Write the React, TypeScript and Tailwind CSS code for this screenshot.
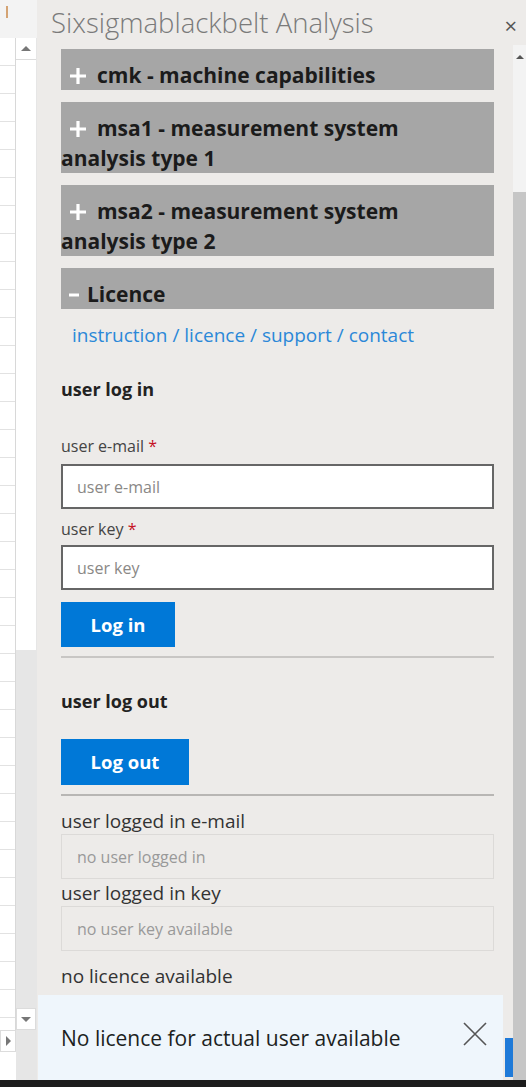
import React from 'react'

const FONT = { fontFamily: '"Open Sans", "Noto Sans", "Liberation Sans", sans-serif' }

function Sign({ open }: { open: boolean }) {
  return open ? (
    <svg width="10" height="16" viewBox="0 0 10 16" className="ml-[8px] mr-[8px] inline-block align-[-1px]">
      <path d="M0 8 H10" stroke="#fff" strokeWidth="3" />
    </svg>
  ) : (
    <svg width="16" height="16" viewBox="0 0 16 16" className="ml-[9px] mr-[11px] inline-block align-[-1px]">
      <path d="M8 0 V16 M0 8 H16" stroke="#fff" strokeWidth="3.2" />
    </svg>
  )
}

function Section({ open, title }: { open?: boolean; title: React.ReactNode }) {
  return (
    <div className="min-h-[41px] bg-[#a6a6a6] pr-[16px] pt-[11px] text-[21px] font-bold leading-[30px] text-[#1b1b1b]">
      <Sign open={!!open} />
      {title}
    </div>
  )
}

function Label({ text }: { text: string }) {
  return (
    <div className="text-[16px] leading-[22px] text-[#444]">
      {text} <span className="text-[#c50f1f]">*</span>
    </div>
  )
}

function LeftStrip() {
  const rows = Array.from({ length: 35 })
  return (
    <div className="flex w-[37px] shrink-0 flex-col bg-[#e6e6e6]">
      <div className="h-[38px] bg-[#f3f3f3] pl-[6px] pt-[6px]">
        <div className="h-[12px] w-[2px] bg-[#d4a373]" />
      </div>
      <div className="flex flex-1">
        <div className="flex w-[16px] flex-col">
          <div className="h-[992px] border-r border-[#d8d8d8] bg-white">
            {rows.map((_, i) => (
              <div key={i} className="h-[28px] border-b border-[#e2e2e2]" />
            ))}
          </div>
          <div className="flex h-[22px] items-center justify-center border border-[#dcdcdc] bg-white">
            <div className="h-0 w-0 border-y-[5px] border-l-[5px] border-y-transparent border-l-[#777]" />
          </div>
          <div className="flex-1 bg-white" />
        </div>
        <div className="flex w-[20px] flex-col">
          <div className="flex h-[612px] flex-col bg-white">
            <div className="flex h-[22px] items-center justify-center border-b border-[#dcdcdc]">
              <div className="h-0 w-0 border-x-[5px] border-b-[5px] border-x-transparent border-b-[#777]" />
            </div>
          </div>
          <div className="h-[358px]" />
          <div className="flex h-[22px] items-center justify-center border border-[#dcdcdc] bg-white">
            <div className="h-0 w-0 border-x-[5px] border-t-[5px] border-x-transparent border-t-[#777]" />
          </div>
        </div>
      </div>
    </div>
  )
}

export default function App() {
  return (
    <div className="relative flex h-[1087px] w-[526px] overflow-hidden bg-[#1c1c1c]" style={FONT}>
      <div className="flex h-[1080px] w-full">
        <LeftStrip />
        <div className="relative flex flex-1 flex-col bg-[#edebe9]">
          <div className="flex h-[45px] shrink-0 items-start justify-between pl-[14px] pr-[9px]">
            <div className="pt-[5px] text-[27.5px] font-light leading-[36px] text-[#7a7a7a]">Sixsigmablackbelt Analysis</div>
            <div className="pt-[10px] text-[22px] leading-[30px] text-[#555]">×</div>
          </div>
          <div className="flex flex-1">
            <div className="flex flex-1 flex-col pl-[24px] pr-[19px] pt-[4px]">
              <div className="flex flex-col gap-[12px]">
                <Section title="cmk - machine capabilities" />
                <Section title="msa1 - measurement system analysis type 1" />
                <Section title="msa2 - measurement system analysis type 2" />
                <Section open title="Licence" />
              </div>
              <div className="mt-[12px] pl-[11px] text-[19px] leading-[28px] text-[#2b88d8]">
                instruction / licence / support / contact
              </div>
              <div className="mt-[27px] text-[18px] font-bold leading-[26px] text-[#222]">user log in</div>
              <div className="mt-[33px]">
                <Label text="user e-mail" />
              </div>
              <div className="mt-[7px] flex h-[45px] items-center border-2 border-[#666] bg-white pl-[14px] text-[16px] text-[#8a8886]">
                user e-mail
              </div>
              <div className="mt-[9px]">
                <Label text="user key" />
              </div>
              <div className="mt-[5px] flex h-[45px] items-center border-2 border-[#666] bg-white pl-[14px] text-[16px] text-[#8a8886]">
                user key
              </div>
              <div className="mt-[12px] flex h-[45px] w-[114px] items-center justify-center bg-[#0078d7] text-[18.5px] font-bold text-white">
                Log in
              </div>
              <div className="mt-[9px] h-[2px] bg-[#c8c6c4]" />
              <div className="mt-[30px] text-[18px] font-bold leading-[26px] text-[#222]">user log out</div>
              <div className="mt-[25px] flex h-[46px] w-[128px] items-center justify-center bg-[#0078d7] text-[18.5px] font-bold text-white">
                Log out
              </div>
              <div className="mt-[9px] h-[2px] bg-[#b8b6b4]" />
              <div className="mt-[13px] text-[19px] leading-[24px] text-[#333]">user logged in e-mail</div>
              <div className="mt-[1px] flex h-[45px] items-center border border-[#dcdad8] pl-[15px] text-[16px] text-[#999]">
                no user logged in
              </div>
              <div className="mt-[2px] text-[19px] leading-[24px] text-[#333]">user logged in key</div>
              <div className="mt-[1px] flex h-[45px] items-center border border-[#dcdad8] pl-[15px] text-[16px] text-[#999]">
                no user key available
              </div>
              <div className="mt-[12px] text-[19px] leading-[26px] text-[#333]">no licence available</div>
            </div>
            <div className="flex w-[13px] shrink-0 flex-col">
              <div className="flex h-[147px] flex-col items-center bg-[#f3f3f3] pt-[10px]">
                <div className="h-0 w-0 border-x-[4px] border-b-[4px] border-x-transparent border-b-[#555]" />
              </div>
              <div className="flex-1 bg-[#c6c6c6]" />
            </div>
          </div>
          <div className="absolute bottom-0 left-[1px] flex h-[85px] w-[465px] items-center justify-between bg-[#eff6fc] pl-[23px] pr-[16px]">
            <div className="text-[21px] leading-[28px] text-[#201f1e]">No licence for actual user available</div>
            <svg width="24" height="24" viewBox="0 0 24 24" className="mb-[8px]">
              <path d="M1 1 L23 23 M23 1 L1 23" stroke="#555" strokeWidth="1.6" fill="none" />
            </svg>
          </div>
          <div className="absolute bottom-[3px] right-[13px] h-[39px] w-[8px] bg-[#1f7ad8]" />
        </div>
      </div>
    </div>
  )
}
